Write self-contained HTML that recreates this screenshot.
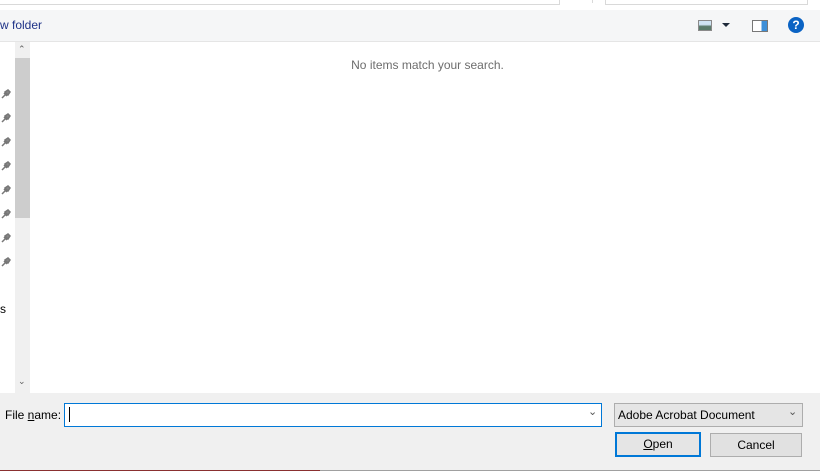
<!DOCTYPE html>
<html><head><style>
body{margin:0;width:820px;height:474px;position:relative;overflow:hidden;font-family:"Liberation Sans",sans-serif;font-size:12px;background:#fff;color:#000}
.a{position:absolute}
.pin{position:absolute;left:1px;width:10px;height:10px}
</style></head><body>
<div class="a" style="left:0;top:0;width:820px;height:10px;background:#fff"></div>
<div class="a" style="left:-2px;top:-2px;width:560px;height:5px;border:1px solid #d9d9d9;"></div>
<div class="a" style="left:578px;top:-2px;width:14px;height:5px;border-right:1px solid #d9d9d9;"></div>
<div class="a" style="left:605px;top:-2px;width:201px;height:5px;border:1px solid #d9d9d9;"></div>
<div class="a" style="left:0;top:10px;width:820px;height:31px;background:#f5f6f7;border-bottom:1px solid #e5e5e5"></div>
<div class="a" style="left:0;top:18px;font-size:12px;color:#1e3287">w folder</div>
<div class="a" style="left:698px;top:20px;width:12px;height:9px;border:1px solid #8a8a8a;background:linear-gradient(#cfe3f3 40%,#5a7a6a 60%)"></div>
<div class="a" style="left:722px;top:23px;width:0;height:0;border-left:4px solid transparent;border-right:4px solid transparent;border-top:4px solid #1e2a3a"></div>
<div class="a" style="left:752px;top:20px;width:14px;height:10px;border:1px solid #777;background:linear-gradient(90deg,#fff 60%,#3d8fd8 60%)"></div>
<div class="a" style="left:788px;top:17px;width:16px;height:16px;border-radius:50%;background:#0a63c4;color:#fff;font-weight:bold;font-size:12px;text-align:center;line-height:16px">?</div>
<div class="a" style="left:15px;top:42px;width:15px;height:351px;background:#f0f0f0"></div>
<div class="a" style="left:15px;top:58px;width:15px;height:160px;background:#cdcdcd"></div>
<div class="a" style="left:18px;top:44px;font-size:9px;color:#606060">&#8963;</div>
<div class="a" style="left:18px;top:376px;font-size:9px;color:#606060">&#8964;</div>
<svg class="pin" style="top:89px" viewBox="0 0 10 10"><path d="M1 9L4 6M3 4L6 7M4 3L7 1L9 3L7 6Z" stroke="#777" stroke-width="1.5" fill="#888"/></svg>
<svg class="pin" style="top:113px" viewBox="0 0 10 10"><path d="M1 9L4 6M3 4L6 7M4 3L7 1L9 3L7 6Z" stroke="#777" stroke-width="1.5" fill="#888"/></svg>
<svg class="pin" style="top:137px" viewBox="0 0 10 10"><path d="M1 9L4 6M3 4L6 7M4 3L7 1L9 3L7 6Z" stroke="#777" stroke-width="1.5" fill="#888"/></svg>
<svg class="pin" style="top:161px" viewBox="0 0 10 10"><path d="M1 9L4 6M3 4L6 7M4 3L7 1L9 3L7 6Z" stroke="#777" stroke-width="1.5" fill="#888"/></svg>
<svg class="pin" style="top:185px" viewBox="0 0 10 10"><path d="M1 9L4 6M3 4L6 7M4 3L7 1L9 3L7 6Z" stroke="#777" stroke-width="1.5" fill="#888"/></svg>
<svg class="pin" style="top:209px" viewBox="0 0 10 10"><path d="M1 9L4 6M3 4L6 7M4 3L7 1L9 3L7 6Z" stroke="#777" stroke-width="1.5" fill="#888"/></svg>
<svg class="pin" style="top:233px" viewBox="0 0 10 10"><path d="M1 9L4 6M3 4L6 7M4 3L7 1L9 3L7 6Z" stroke="#777" stroke-width="1.5" fill="#888"/></svg>
<svg class="pin" style="top:257px" viewBox="0 0 10 10"><path d="M1 9L4 6M3 4L6 7M4 3L7 1L9 3L7 6Z" stroke="#777" stroke-width="1.5" fill="#888"/></svg>
<div class="a" style="left:0;top:302px;font-size:12px">s</div>
<div class="a" style="left:33px;top:58px;width:789px;text-align:center;color:#6d6d6d;font-size:12px">No items match your search.</div>
<div class="a" style="left:0;top:393px;width:820px;height:77px;background:#f0f0f0"></div>
<div class="a" style="left:5px;top:408px">File <u>n</u>ame:</div>
<div class="a" style="left:64px;top:403px;width:536px;height:22px;border:1px solid #0078d7;background:#fff"></div>
<div class="a" style="left:69px;top:407px;width:1px;height:15px;background:#000"></div>
<div class="a" style="left:588px;top:405px;color:#555;font-size:11px">&#8964;</div>
<div class="a" style="left:614px;top:403px;width:187px;height:22px;border:1px solid #adadad;background:#e5e5e5"></div>
<div class="a" style="left:618px;top:408px">Adobe Acrobat Document</div>
<div class="a" style="left:788px;top:405px;color:#555;font-size:11px">&#8964;</div>
<div class="a" style="left:615px;top:432px;width:82px;height:21px;border:2px solid #0078d7;background:#e5e5e5;text-align:center;line-height:21px"><u>O</u>pen</div>
<div class="a" style="left:710px;top:433px;width:90px;height:22px;border:1px solid #adadad;background:#e1e1e1;text-align:center;line-height:22px">Cancel</div>
<div class="a" style="left:0;top:470px;width:320px;height:1px;background:#8a3030"></div>
<div class="a" style="left:320px;top:470px;width:500px;height:1px;background:#a0a0a0"></div>
<div class="a" style="left:0;top:471px;width:820px;height:3px;background:#fff"></div>
</body></html>
